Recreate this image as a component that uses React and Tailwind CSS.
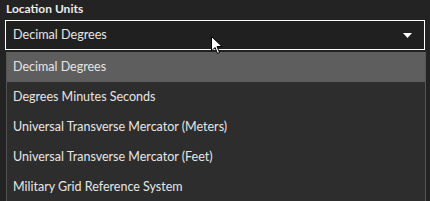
const options = [
  'Decimal Degrees',
  'Degrees Minutes Seconds',
  'Universal Transverse Mercator (Meters)',
  'Universal Transverse Mercator (Feet)',
  'Military Grid Reference System',
]

function Cursor() {
  return (
    <svg
      className="absolute left-[211px] top-[36px]"
      width="13"
      height="19"
      viewBox="0 0 13 19"
    >
      <path
        d="M0.5 0.5 L0.5 15 L4 11.5 L6.5 17.5 L8.5 16.5 L6 10.5 L11 10.5 Z"
        fill="#fff"
        stroke="#000"
        strokeWidth="1"
      />
    </svg>
  )
}

export default function App() {
  return (
    <div className="relative h-[201px] w-[430px] overflow-hidden bg-[#232323] font-['Lato',sans-serif] text-[#e6e6e6]">
      <div className="px-[6px] pt-[1px] text-[12px] font-bold leading-[16px] text-[#ececec]">
        Location Units
      </div>
      <div className="mx-[5px] mt-[3px] flex h-[30px] items-center justify-between border border-white bg-[#202020] pl-[7px] pr-[12px] text-[12.6px]">
        <span>Decimal Degrees</span>
        <svg width="9" height="5" viewBox="0 0 9 5">
          <path d="M0 0 L9 0 L4.5 5 Z" fill="#fff" />
        </svg>
      </div>
      <div className="ml-[6px] mr-[4px] mt-[2px] border-x border-[#555] bg-[#2d2d2d]">
        {options.map((o, i) => (
          <div
            key={o}
            className={
              'flex h-[30px] items-center pl-[6px] text-[12.5px] ' +
              (i === 0 ? 'bg-[#5e5e5e]' : '')
            }
          >
            {o}
          </div>
        ))}
      </div>
      <Cursor />
    </div>
  )
}
